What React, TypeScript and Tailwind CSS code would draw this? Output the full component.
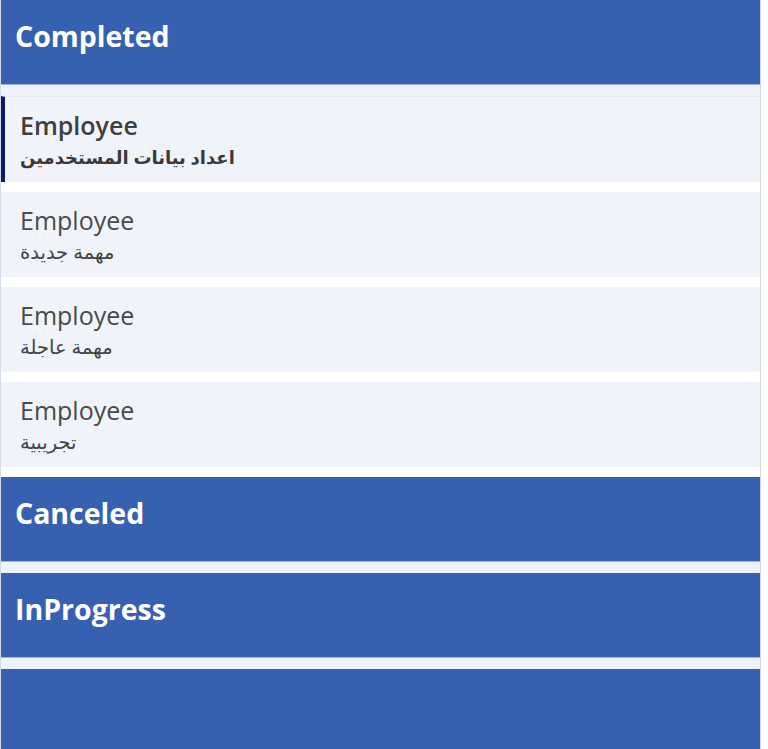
import React from 'react'

type Task = { owner: string; title: string; active?: boolean }

const GROUPS: { name: string; tasks: Task[] }[] = [
  {
    name: 'Completed',
    tasks: [
      { owner: 'Employee', title: 'اعداد بيانات المستخدمين', active: true },
      { owner: 'Employee', title: 'مهمة جديدة' },
      { owner: 'Employee', title: 'مهمة عاجلة' },
      { owner: 'Employee', title: 'تجريبية' },
    ],
  },
  { name: 'Canceled', tasks: [] },
  { name: 'InProgress', tasks: [] },
  { name: '', tasks: [] },
]

export default function App() {
  return (
    <div
      className="min-h-screen bg-white"
      style={{ fontFamily: '"Open Sans", "DejaVu Sans", sans-serif' }}
    >
      <div className="w-[761px] border-x border-[#d3dbe9] bg-white">
        {GROUPS.map((g, gi) => (
          <section key={gi}>
            <div className="h-[85px] border-b border-[#9fb3dc] bg-[#3860b1] pl-[14px] pt-4">
              <h2 className="text-[28.5px] font-bold leading-10 text-white">{g.name}</h2>
            </div>
            <div className="h-[11px] bg-[#eff3f9]" />
            {g.tasks.map((t, ti) => (
              <TaskRow key={ti} task={t} first={ti === 0} />
            ))}
          </section>
        ))}
      </div>
    </div>
  )
}

function TaskRow({ task, first }: { task: Task; first: boolean }) {
  return (
    <div className="mb-[10px]">
      <div
        className={
          'border-l-4 bg-[#f0f3f9] pl-[15px] pt-[12px] ' +
          (task.active ? 'border-[#0b1a6c]' : 'border-transparent') +
          (first ? ' h-[86px] border-t border-t-[#e2e7f0]' : ' h-[85px]')
        }
      >
        <div
          className={
            'text-[25px] leading-8 ' +
            (task.active ? 'font-semibold text-[#404040]' : 'font-normal text-[#4a4a4a]')
          }
        >
          {task.owner}
        </div>
        <div
          className={
            'pt-[2px] leading-7 ' +
            (task.active
              ? 'text-[18px] font-bold text-[#3a3a3a]'
              : 'text-[19.5px] font-normal text-[#444444]')
          }
        >
          {task.title}
        </div>
      </div>
    </div>
  )
}
